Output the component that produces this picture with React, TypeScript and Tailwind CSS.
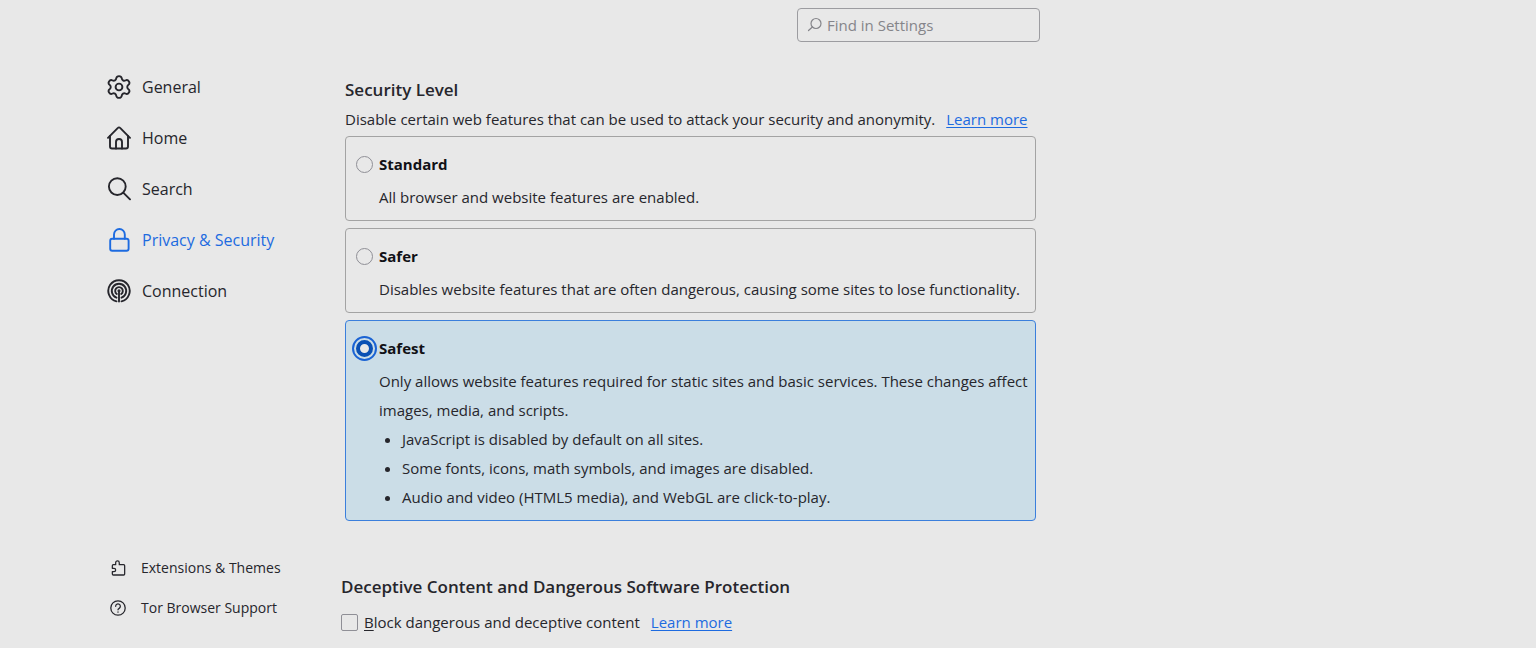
import React, { useState } from 'react';

type IconProps = { children: React.ReactNode; size?: 'md' | 'sm' };

const Icon: React.FC<IconProps> = ({ children, size = 'md' }) => (
  <svg
    viewBox="0 0 24 24"
    fill="none"
    stroke="currentColor"
    strokeWidth="1.9"
    strokeLinecap="round"
    strokeLinejoin="round"
    aria-hidden="true"
    className={size === 'md' ? 'size-6 shrink-0' : 'size-4 shrink-0'}
  >
    {children}
  </svg>
);

const GearIcon = () => (
  <Icon>
    <path d="M9.2 3.4a2.85 2.85 0 0 1 5.6 0 2.5 2.5 0 0 0 3.6 2.1 2.7 2.7 0 0 1 2.8 4.6 2.4 2.4 0 0 0 0 3.8 2.7 2.7 0 0 1-2.8 4.6 2.5 2.5 0 0 0-3.6 2.1 2.85 2.85 0 0 1-5.600 0 2.500 2.500 0 0 0-3.600-2.100 2.700 2.700 0 0 1-2.800-4.600 2.400 2.400 0 0 0 0-3.800 2.700 2.700 0 0 1 2.800-4.600 2.500 2.500 0 0 0 3.600-2.100" />
    <circle cx="12" cy="12" r="3.4" />
  </Icon>
);

const HomeIcon = () => (
  <Icon>
    <path d="M1 11.8 10.900 1.900a1.500 1.500 0 0 1 2.200 0L23 11.800" />
    <path d="M3 10v10.500a2 2 0 0 0 2 2h14a2 2 0 0 0 2-2V10" />
    <path d="M9 22.500V16a3 3 0 0 1 6 0v6.500" />
  </Icon>
);

const SearchIcon = () => (
  <Icon>
    <circle cx="10.3" cy="9.6" r="8.4" />
    <path d="m16.500 15.800 6.500 6.500" />
  </Icon>
);

const LockIcon = () => (
  <Icon>
    <rect x="3.2" y="10.800" width="18.400" height="12" rx="2" />
    <path d="M7 10.800V6.400a5.400 5.400 0 0 1 10.800 0v4.400" />
  </Icon>
);

const ConnectionIcon = () => (
  <Icon>
    <path d="M9.500 22.300a10.700 10.700 0 1 1 5 0" />
    <path d="M9.500 18.700a7.200 7.200 0 1 1 5 0" />
    <path d="M9.800 15a3.800 3.800 0 1 1 4.400 0" />
    <circle cx="12" cy="11.800" r=".6" fill="currentColor" />
    <path d="M12 12v10.500" />
  </Icon>
);

const PuzzleIcon = () => (
  <Icon size="sm">
    <path d="M3.500 12.500V8.500A1.500 1.500 0 0 1 5 7h3.500V4a2.700 2.700 0 0 1 5.400 0v3h6.600A1.500 1.500 0 0 1 22 8.500v12.500a1.500 1.500 0 0 1-1.500 1.500H5A1.500 1.500 0 0 1 3.500 21v-3.500H6a2.500 2.500 0 0 0 0-5H3.500" />
  </Icon>
);

const HelpIcon = () => (
  <Icon size="sm">
    <circle cx="12" cy="12" r="10.800" />
    <path d="M8.500 9.500a3.500 3.500 0 1 1 5.300 3c-1.200.7-1.800 1.200-1.800 2.300" />
    <path d="M12 18v.2" />
  </Icon>
);

const categories = [
  { label: 'General', icon: GearIcon },
  { label: 'Home', icon: HomeIcon },
  { label: 'Search', icon: SearchIcon },
  { label: 'Privacy & Security', icon: LockIcon },
  { label: 'Connection', icon: ConnectionIcon },
];

const footerLinks = [
  { label: 'Extensions & Themes', icon: PuzzleIcon },
  { label: 'Tor Browser Support', icon: HelpIcon },
];

const levels = [
  {
    id: 'standard',
    title: 'Standard',
    description: 'All browser and website features are enabled.',
    details: [],
  },
  {
    id: 'safer',
    title: 'Safer',
    description: 'Disables website features that are often dangerous, causing some sites to lose functionality.',
    details: [],
  },
  {
    id: 'safest',
    title: 'Safest',
    description:
      'Only allows website features required for static sites and basic services. These changes affect images, media, and scripts.',
    details: [
      'JavaScript is disabled by default on all sites.',
      'Some fonts, icons, math symbols, and images are disabled.',
      'Audio and video (HTML5 media), and WebGL are click-to-play.',
    ],
  },
];

const LearnMore = () => (
  <a href="#learn-more" className="text-[#1d6be0] underline underline-offset-2">
    Learn more
  </a>
);

const Sidebar: React.FC = () => {
  const [active, setActive] = useState('Privacy & Security');

  return (
    <aside className="flex w-[341px] shrink-0 flex-col justify-between pt-[61px] pb-5 pl-[107px]">
      <nav className="flex flex-col text-base">
        {categories.map(({ label, icon: CategoryIcon }) => (
          <button
            key={label}
            type="button"
            onClick={() => setActive(label)}
            className={`flex h-[51px] items-center gap-[11px] text-left ${
              label === active ? 'text-[#1d6be0]' : 'text-[#26262c]'
            }`}
          >
            <CategoryIcon />
            {label}
          </button>
        ))}
      </nav>
      <div className="flex flex-col pl-[3px] text-sm">
        {footerLinks.map(({ label, icon: LinkIcon }) => (
          <a key={label} href="#support" className="flex h-10 items-center gap-[15px]">
            <LinkIcon />
            {label}
          </a>
        ))}
      </div>
    </aside>
  );
};

const SecurityLevels: React.FC = () => {
  const [selected, setSelected] = useState('safest');

  return (
    <div className="mt-[5px] flex flex-col gap-[7px]">
      {levels.map(({ id, title, description, details }) => (
        <div
          key={id}
          className={`rounded border pt-[13px] pb-2 pl-[10px] leading-[29px] ${
            id === selected ? 'border-[#3b7fdc] bg-[#cbdde7]' : 'border-[#a3a3a3]'
          }`}
        >
          <label className="flex items-center gap-[6px] font-bold text-[#111116]">
            <input
              type="radio"
              name="security-level"
              checked={id === selected}
              onChange={() => setSelected(id)}
              className="size-[17px] shrink-0 appearance-none rounded-full border border-[#8f8f96] checked:border-4 checked:border-[#0a50b4] checked:bg-[#e8e8e8] checked:outline-2 checked:outline-offset-2 checked:outline-[#1a63d4]"
            />
            {title}
          </label>
          <p className="mt-1 pl-[23px]">{description}</p>
          {details.length > 0 && (
            <ul className="list-disc pl-[46px]">
              {details.map((detail) => (
                <li key={detail}>{detail}</li>
              ))}
            </ul>
          )}
        </div>
      ))}
    </div>
  );
};

export default function App() {
  return (
    <div className="flex min-h-screen bg-[#e8e8e8] font-['Open_Sans',sans-serif] text-[15px] leading-6 text-[#26262c]">
      <Sidebar />
      <main className="w-full max-w-[699px] pt-2">
        <div className="ml-auto flex h-[34px] w-[243px] items-center gap-1 rounded border border-[#9c9ca0] px-[9px] text-[#85858a]">
          <svg
            viewBox="0 0 16 16"
            fill="none"
            stroke="currentColor"
            strokeWidth="1.2"
            strokeLinecap="round"
            aria-hidden="true"
            className="size-4 shrink-0"
          >
            <circle cx="9" cy="6.500" r="5" />
            <path d="M5.400 10 1.500 13.500" />
          </svg>
          <input
            type="search"
            aria-label="Find in Settings"
            placeholder="Find in Settings"
            className="min-w-0 flex-1 bg-transparent outline-none placeholder:text-[#85858a]"
          />
        </div>

        <section className="px-1 pt-9">
          <h2 className="text-[17px] leading-6 font-semibold">Security Level</h2>
          <p className="mt-[5px] flex gap-[11px]">
            Disable certain web features that can be used to attack your security and anonymity.
            <LearnMore />
          </p>
          <SecurityLevels />
        </section>

        <section className="pt-[54px]">
          <h2 className="text-[17px] leading-6 font-semibold">Deceptive Content and Dangerous Software Protection</h2>
          <div className="mt-[11px] flex items-center">
            <label className="mr-[11px] flex items-center gap-[6px]">
              <input
                type="checkbox"
                className="size-[17px] shrink-0 appearance-none rounded-[2px] border border-[#8f8f96] checked:bg-[#0a50b4]"
              />
              <span>
                <span className="underline underline-offset-2">B</span>lock dangerous and deceptive content
              </span>
            </label>
            <LearnMore />
          </div>
        </section>
      </main>
    </div>
  );
}
